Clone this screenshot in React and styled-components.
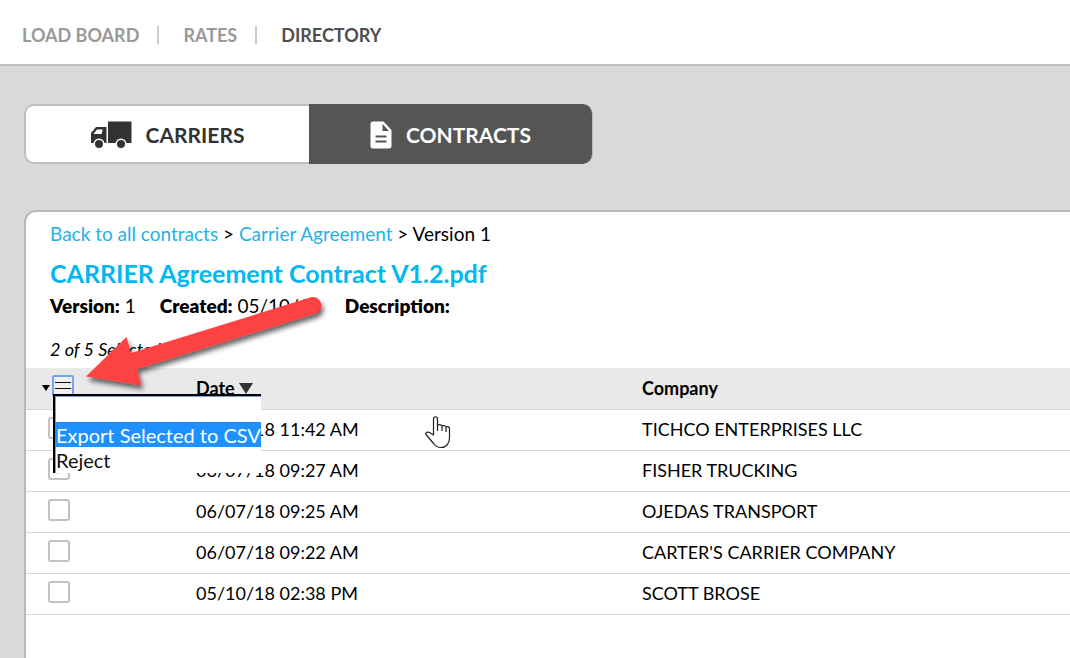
import React, { useState } from "react";
import styled, { createGlobalStyle } from "styled-components";

const GlobalStyle = createGlobalStyle`
  *, *::before, *::after { box-sizing: border-box; }
  html, body, #root { height: 100%; }
  body {
    margin: 0;
    overflow: hidden;
    background: #d9d9d9;
    color: #000;
    font: 19px/24px Lato, "Liberation Sans", sans-serif;
  }
`;

const Page = styled.div`
  display: flex;
  flex-direction: column;
  min-height: 100%;
`;

const Header = styled.header`
  padding: 20px 22px;
  background: #fff;
  border-bottom: 2px solid #bfbfbf;
`;

const Nav = styled.nav`
  display: flex;
  gap: 18px;
  padding: 2px 0 0;
  height: 24px;
`;

const NavLink = styled.a`
  color: ${(p) => (p.$active ? "#4f4f4f" : "#999")};
  font-size: 18px;
  font-weight: 700;
  line-height: 26px;
  text-decoration: none;
`;

const Divider = styled.span`
  width: 2px;
  height: 18px;
  margin: 4px 6px 0 0;
  background: #ccc;
`;

const Tabs = styled.div`
  display: flex;
  max-width: 569px;
  height: 60px;
  margin: 38px 24px 46px;
`;

const Tab = styled.button`
  flex: 1;
  display: flex;
  align-items: center;
  justify-content: center;
  gap: 14px;
  padding: 2px 0 0;
  font: 700 21px/28px Lato, "Liberation Sans", sans-serif;
  color: ${(p) => (p.$active ? "#fff" : "#333")};
  background: ${(p) => (p.$active ? "#555" : "#fff")};
  border: ${(p) => (p.$active ? "0" : "2px solid #bfbfbf")};
  border-right: ${(p) => (p.$active ? "1px solid #bfbfbf" : "0")};
  border-radius: ${(p) => (p.$active ? "0 10px 10px 0" : "10px 0 0 10px")};
`;

const Panel = styled.main`
  position: relative;
  flex: 1;
  margin-left: 24px;
  background: #fff;
  border: solid #b9b9b9;
  border-width: 2px 0 0 2px;
  border-radius: 12px 0 0 0;
`;

const Intro = styled.div`
  padding: 10px 24px 7px;
`;

const Breadcrumb = styled.nav`
  line-height: 24px;
`;

const Link = styled.a`
  color: #27b1e6;
  text-decoration: none;
`;

const Title = styled.h1`
  margin: 11px 0 5px;
  color: #00b9f2;
  font-size: 25px;
  font-weight: 700;
  line-height: 32px;
`;

const Details = styled.div`
  display: flex;
  gap: 24px;
  line-height: 24px;
`;

const Label = styled.b`
  font-weight: 800;
`;

const Selected = styled.p`
  margin: 19px 0 0;
  font-size: 18px;
  font-style: italic;
  line-height: 24px;
`;

const Table = styled.table`
  width: 100%;
  border-collapse: separate;
  border-spacing: 0;
  table-layout: fixed;
`;

const Col = styled.col`
  width: ${(p) => p.$width};
`;

const Row = styled.tr`
  height: ${(p) => (p.$head ? "42px" : "41px")};
  background: ${(p) => (p.$head ? "#e9e9e9" : "#fff")};
`;

const HeadCell = styled.th`
  padding: 0;
  border-bottom: 1px solid #d5d5d5;
  font-size: 18px;
  font-weight: 700;
  line-height: 23px;
  text-align: left;
`;

const Cell = styled.td`
  padding: 0 0 2px;
  border-bottom: 1px solid #d5d5d5;
  font-size: 18px;
  white-space: nowrap;
`;

const CheckCell = styled(Cell)`
  padding: 7px 0 11px 22px;
  line-height: 0;
`;

const Checkbox = styled.input`
  appearance: none;
  width: 22px;
  height: 22px;
  margin: 0;
  background: #fff;
  border: 2px solid #c2c2c2;
  border-radius: 3px;

  &:checked::after {
    content: "";
    display: block;
    width: 7px;
    height: 12px;
    margin: 1px 0 0 6px;
    border: solid #27b1e6;
    border-width: 0 3px 3px 0;
    transform: rotate(45deg);
  }
`;

const SortButton = styled.button`
  display: flex;
  align-items: center;
  gap: 4px;
  padding: 0;
  color: inherit;
  font: inherit;
  background: none;
  border: 0;
`;

const Actions = styled.div`
  position: relative;
  display: flex;
  align-items: center;
  gap: 2px;
  padding: 0 0 5px 16px;
`;

const Caret = styled.svg`
  margin-top: 4px;
`;

const MenuButton = styled.button`
  display: flex;
  align-items: center;
  justify-content: center;
  width: 22px;
  height: 22px;
  padding: 0;
  background: #f1f1f1;
  border: 2px solid #74a5f2;
  border-radius: 2px;
`;

const Menu = styled.ul`
  position: absolute;
  z-index: 1;
  top: 19px;
  left: 27px;
  width: 208px;
  height: 79px;
  margin: 0;
  padding: 1px 0 0;
  list-style: none;
  background: #fff;
  border: solid #000;
  border-width: 2px 0 0 2px;
  box-shadow: inset 1px 1px 0 #7f9fd8;
`;

const MenuItem = styled.button`
  display: block;
  width: 100%;
  height: 25px;
  padding: 0 1px;
  color: ${(p) => (p.$active ? "#fff" : "#111")};
  font: 20px/24px Lato, "Liberation Sans", sans-serif;
  text-align: left;
  white-space: nowrap;
  background: ${(p) => (p.$active ? "#1e90ff" : "transparent")};
  border: 0;
`;

const Arrow = styled.svg`
  position: absolute;
  z-index: 2;
  top: 78px;
  left: 54px;
  pointer-events: none;
`;

const Pointer = styled.svg`
  position: absolute;
  z-index: 2;
  top: 204px;
  left: 398px;
  pointer-events: none;
`;

const TruckIcon = () => (
  <svg width="41" height="28" viewBox="0 0 41 28" aria-hidden="true">
    <path fill="#333" d="M17 0.5h23.5V22H17z" />
    <path fill="#333" d="M5 6h10.500v16H0V12z" />
    <path fill="#fff" d="M6 8.500H11.500v1L10.500 13H2.500z" />
    <circle cx="8" cy="23" r="5.500" fill="#fff" />
    <circle cx="30" cy="23" r="5.500" fill="#fff" />
    <circle cx="8" cy="23" r="4" fill="#333" />
    <circle cx="30" cy="23" r="4" fill="#333" />
  </svg>
);

const DocumentIcon = () => (
  <svg width="22" height="28" viewBox="0 0 22 28" aria-hidden="true">
    <path
      fill="#fff"
      fillRule="evenodd"
      d="M3 .5h10.500L21.500 9v16a2.500 2.500 0 0 1-2.500 2.500H3A2.500 2.500 0 0 1 .5 25V3A2.500 2.500 0 0 1 3 .5zM12.500 3v7H19zM5.500 14.500v2h11v-2zm0 5v2h11v-2z"
    />
  </svg>
);

const rows = [
  { date: "06/07/18 11:42 AM", company: "TICHCO ENTERPRISES LLC", checked: true },
  { date: "06/07/18 09:27 AM", company: "FISHER TRUCKING", checked: true },
  { date: "06/07/18 09:25 AM", company: "OJEDAS TRANSPORT" },
  { date: "06/07/18 09:22 AM", company: "CARTER'S CARRIER COMPANY" },
  { date: "05/10/18 02:38 PM", company: "SCOTT BROSE" },
];

export default function App() {
  const [open, setOpen] = useState(true);

  return (
    <Page>
      <GlobalStyle />
      <Header>
        <Nav aria-label="Main">
          <NavLink href="#load-board">LOAD BOARD</NavLink>
          <Divider />
          <NavLink href="#rates">RATES</NavLink>
          <Divider />
          <NavLink href="#directory" $active>DIRECTORY</NavLink>
        </Nav>
      </Header>
      <Tabs>
        <Tab type="button"><TruckIcon />CARRIERS</Tab>
        <Tab type="button" $active><DocumentIcon />CONTRACTS</Tab>
      </Tabs>
      <Panel>
        <Intro>
          <Breadcrumb aria-label="Breadcrumb">
            <Link href="#contracts">Back to all contracts</Link> &gt;{" "}
            <Link href="#agreement">Carrier Agreement</Link> &gt; Version 1
          </Breadcrumb>
          <Title>CARRIER Agreement Contract V1.2.pdf</Title>
          <Details>
            <span><Label>Version:</Label> 1</span>
            <span><Label>Created:</Label> 05/10/18</span>
            <span><Label>Description:</Label></span>
          </Details>
          <Selected>2 of 5 Selected</Selected>
        </Intro>
        <Table>
          <colgroup>
            <Col $width="170px" />
            <Col $width="446px" />
            <Col $width="auto" />
          </colgroup>
          <thead>
            <Row $head>
              <HeadCell>
                <Actions>
                  <Caret width="8" height="6" viewBox="0 0 8 6" aria-hidden="true">
                    <path d="M0 0h8L4 6z" />
                  </Caret>
                  <MenuButton
                    type="button"
                    aria-label="Actions"
                    aria-expanded={open}
                    onClick={() => setOpen(!open)}
                  >
                    <svg width="16" height="12" viewBox="0 0 16 12" aria-hidden="true">
                      <path d="M0 2.500h16M0 8.500h16" stroke="#111" />
                    </svg>
                  </MenuButton>
                  {open && (
                    <Menu>
                      <li><MenuItem type="button" aria-label="No action" /></li>
                      <li><MenuItem type="button" $active>Export Selected to CSV</MenuItem></li>
                      <li><MenuItem type="button">Reject</MenuItem></li>
                    </Menu>
                  )}
                </Actions>
              </HeadCell>
              <HeadCell>
                <SortButton type="button">
                  Date
                  <svg width="14" height="11" viewBox="0 0 14 11" aria-hidden="true">
                    <path fill="#333" d="M0 0h14L7 11z" />
                  </svg>
                </SortButton>
              </HeadCell>
              <HeadCell>Company</HeadCell>
            </Row>
          </thead>
          <tbody>
            {rows.map((row) => (
              <Row key={row.company}>
                <CheckCell>
                  <Checkbox
                    type="checkbox"
                    defaultChecked={row.checked}
                    aria-label={`Select ${row.company}`}
                  />
                </CheckCell>
                <Cell>{row.date}</Cell>
                <Cell>{row.company}</Cell>
              </Row>
            ))}
          </tbody>
        </Table>
        <Arrow width="256" height="112" viewBox="80 290 256 112" aria-hidden="true">
          <defs>
            <filter id="arrow-shadow" x="-10%" y="-20%" width="120%" height="150%">
              <feDropShadow dx="2" dy="4" stdDeviation="2.500" floodColor="#000" floodOpacity="0.6" />
            </filter>
          </defs>
          <path
            fill="#fd4343"
            filter="url(#arrow-shadow)"
            d="M86 376.500L126.500 337L131 353L311 297.300A8.500 8.500 0 0 1 316 313.500L137 369L141.500 385.500z"
          />
        </Arrow>
        <Pointer width="28" height="34" viewBox="424 416 28 34" aria-hidden="true">
          <path
            fill="#fff"
            stroke="#20202c"
            strokeWidth="1.200"
            strokeLinejoin="round"
            d="M433.500 435V419c0-3 4-3 4 0V425c3-1 4 0 4.500 1c2-1 4 0 4 1c2-1 3.500 0 3.500 2V438c0 6-4 9.500-8.500 9.500c-3 0-5-1-7-3.500L426 434.500c-1-2 1.500-3 3.500-2z M437.500 425v6M442 426v5M446 427v5"
          />
        </Pointer>
      </Panel>
    </Page>
  );
}
